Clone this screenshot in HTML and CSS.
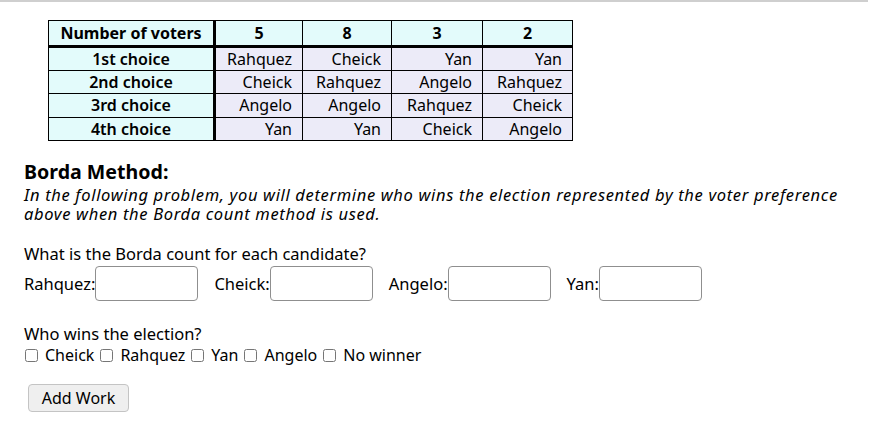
FILE: index.html
```html
<!DOCTYPE html>
<html>
<head>
<meta charset="utf-8">
<link rel="stylesheet" href="styles.css">
</head>
<body>
<div class="page">
  <table class="votes">
    <colgroup>
      <col class="w-lab"><col class="w1"><col class="w2"><col class="w3"><col class="w4">
    </colgroup>
    <thead>
      <tr class="hrow">
        <th class="lab">Number of voters</th>
        <th>5</th>
        <th>8</th>
        <th>3</th>
        <th>2</th>
      </tr>
    </thead>
    <tbody>
      <tr class="brow"><th class="lab">1st choice</th><td>Rahquez</td><td>Cheick</td><td>Yan</td><td>Yan</td></tr>
      <tr class="brow"><th class="lab">2nd choice</th><td>Cheick</td><td>Rahquez</td><td>Angelo</td><td>Rahquez</td></tr>
      <tr class="brow"><th class="lab">3rd choice</th><td>Angelo</td><td>Angelo</td><td>Rahquez</td><td>Cheick</td></tr>
      <tr class="brow"><th class="lab">4th choice</th><td>Yan</td><td>Yan</td><td>Cheick</td><td>Angelo</td></tr>
    </tbody>
  </table>

  <h3 class="title">Borda Method:</h3>
  <p class="intro">In the following problem, you will determine who wins the election represented by the voter preference above when the Borda count method is used.</p>

  <p class="q">What is the Borda count for each candidate?</p>
  <div class="inputs">
    <label class="field">Rahquez:<input type="text" class="box"></label>
    <label class="field">Cheick:<input type="text" class="box"></label>
    <label class="field">Angelo:<input type="text" class="box"></label>
    <label class="field">Yan:<input type="text" class="box"></label>
  </div>

  <p class="q q2">Who wins the election?</p>
  <div class="checks">
    <label class="opt"><input type="checkbox" class="cb">Cheick</label>
    <label class="opt"><input type="checkbox" class="cb">Rahquez</label>
    <label class="opt"><input type="checkbox" class="cb">Yan</label>
    <label class="opt"><input type="checkbox" class="cb">Angelo</label>
    <label class="opt"><input type="checkbox" class="cb">No winner</label>
  </div>

  <button class="work" type="button">Add Work</button>
</div>
</body>
</html>
```
FILE: styles.css
```css
html, body {
  margin: 0;
  padding: 0;
  background: #fff;
}
body {
  font-family: "Noto Sans", "DejaVu Sans", sans-serif;
  font-size: 16.5px;
  color: #000;
}
.page {
  width: 868px;
  border-top: 2px solid #cfcfcf;
  padding: 18px 0 0 24px;
  box-sizing: border-box;
}
.votes {
  margin-left: 24px;
  border-collapse: collapse;
  table-layout: fixed;
  width: 524px;
  font-size: 16px;
  line-height: 20px;
}
.w-lab { width: 166px; }
.w1 { width: 88px; }
.w2 { width: 89px; }
.w3 { width: 91px; }
.w4 { width: 90px; }
.hrow { height: 26px; }
.brow { height: 23.5px; }
.votes th, .votes td {
  border: 1px solid #000;
  padding: 0 10px 0 4px;
}
.votes thead th {
  background: #e3fbfb;
  font-weight: bold;
  text-align: center;
  padding: 0 4px;
  border-bottom: 3px solid #000;
}
.votes th.lab {
  background: #e3fbfb;
  text-align: center;
  border-right: 3px solid #000;
  padding: 0 4px;
}
.votes tbody th.lab { font-weight: 600; }
.votes td {
  background: #ecebf8;
  text-align: right;
}

.title {
  margin: 19px 0 0;
  font-size: 19.6px;
  line-height: 24px;
  font-weight: bold;
}
.intro {
  margin: 1px 0 0;
  font-style: italic;
  line-height: 19px;
  letter-spacing: 0.66px;
}
.q {
  margin: 21px 0 0;
  line-height: 20px;
}
.inputs {
  display: flex;
  align-items: center;
  gap: 16px;
  margin-top: 2px;
}
.field {
  display: flex;
  align-items: center;
}
.box {
  width: 103px;
  height: 35px;
  box-sizing: border-box;
  border: 1px solid #8f8f8f;
  border-radius: 4px;
  margin: 0;
  padding: 2px 4px;
  font: inherit;
}
.q2 {
  margin-top: 23px;
}
.checks {
  display: flex;
  align-items: center;
  gap: 6px;
  line-height: 20px;
  margin-top: 1px;
  padding-left: 1px;
  font-size: 16px;
}
.opt {
  display: flex;
  align-items: center;
}
.cb {
  width: 13px;
  height: 13px;
  margin: 0 7px 0 0;
}
.work {
  display: block;
  margin: 19px 0 0 4px;
  width: 101px;
  height: 28px;
  font: inherit;
  font-size: 16px;
  background: #efefef;
  border: 1px solid #c4c4c4;
  border-radius: 4px;
  color: #000;
}
```
